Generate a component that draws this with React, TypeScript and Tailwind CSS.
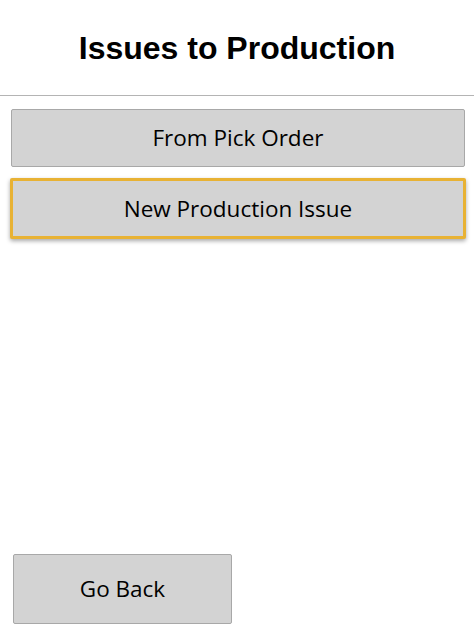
import React from 'react';

const btnFont = { fontFamily: '"Open Sans", "Noto Sans", sans-serif' };

export default function App() {
  return (
    <div className="flex h-[632px] w-[474px] flex-col bg-white">
      {/* Header */}
      <div className="flex h-[96px] items-center justify-center border-b border-[#b4b4b4]">
        <h1
          className="text-[32px] font-bold text-black"
          style={{ fontFamily: '"Liberation Sans", Arial, sans-serif' }}
        >
          Issues to Production
        </h1>
      </div>

      {/* Menu */}
      <div className="flex flex-col gap-[11px] pl-[10px] pr-[8px] pt-[13px]">
        <button
          className="mx-[1px] h-[58px] rounded-[2px] border border-[#a8a8a8] bg-[#d3d3d3] text-[22.5px] text-black"
          style={btnFont}
        >
          From Pick Order
        </button>
        <button
          className="h-[61px] rounded-[2px] border-[3px] border-[#e8b234] bg-[#d3d3d3] text-[22.5px] text-black shadow-[0_2px_4px_rgba(0,0,0,0.35)]"
          style={btnFont}
        >
          New Production Issue
        </button>
      </div>

      {/* Footer */}
      <div className="mt-auto px-[13px] pb-[8px]">
        <button
          className="h-[70px] w-[219px] rounded-[2px] border border-[#a8a8a8] bg-[#d3d3d3] text-[22.5px] text-black"
          style={btnFont}
        >
          Go Back
        </button>
      </div>
    </div>
  );
}
